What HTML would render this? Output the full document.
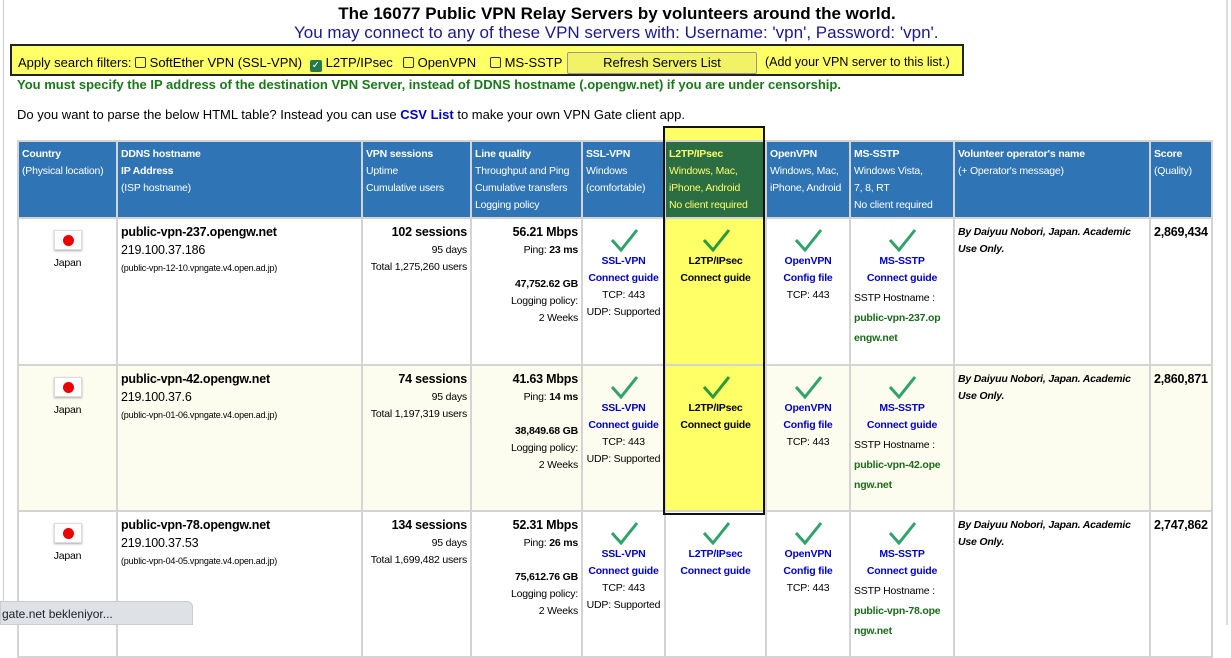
<!DOCTYPE html>
<html><head><meta charset="utf-8"><style>
*{margin:0;padding:0;box-sizing:border-box}
body{width:1231px;height:625px;overflow:hidden;background:#fff;font-family:"Liberation Sans",sans-serif;position:relative;color:#000}
.a{position:absolute;white-space:nowrap}
.lb{position:absolute;left:3px;top:0;width:1px;height:625px;background:#ccc}
.rb{position:absolute;left:1226px;top:0;width:2px;height:625px;background:#ddd}
table{position:absolute;left:17px;top:140px;border-collapse:collapse;table-layout:fixed;font-size:10.5px;line-height:17px;letter-spacing:-0.2px}
td{border:2px solid #d4d4d4;vertical-align:top;padding:5px 3px 3px;white-space:nowrap;overflow:hidden}
tr.h td{background:#2f74b5;color:#fff;border-color:#d4d4d4;height:76px;padding-top:4px}
.c{text-align:center}.r{text-align:right}
a{color:#0000cc;font-weight:bold;text-decoration:none}
.g{color:#1a6b1a;font-weight:bold}
.big{font-size:12.5px;line-height:17px}
.flag{width:28px;height:20px;margin:6px auto 5px;border:1px solid #ddd;box-shadow:0 1px 2px #aaa;background:#fff;position:relative}
.flag:after{content:"";position:absolute;left:8px;top:4px;width:11px;height:11px;border-radius:50%;background:#e00}
svg.ck{display:block;margin:4px auto 1px}
.cb{display:inline-block;width:11px;height:11px;border:1px solid #333;border-radius:2px;vertical-align:-1px}
</style></head><body>
<div class="lb"></div><div class="rb"></div>
<div class="a" style="left:337px;top:4px;width:560px;text-align:center;font-size:17px;font-weight:bold">The 16077 Public VPN Relay Servers by volunteers around the world.</div>
<div class="a" style="left:294px;top:23px;width:644px;text-align:center;font-size:17px;color:#1a1a8c">You may connect to any of these VPN servers with: Username: 'vpn', Password: 'vpn'.</div>
<div class="a" style="left:10px;top:44px;width:954px;height:32px;background:#ffff66;border:2px solid #222"></div>
<div class="a" style="left:18px;top:55px;font-size:13px">Apply search filters: <span class="cb"></span> SoftEther VPN (SSL-VPN)</div>
<div class="a" style="left:310px;top:55px;font-size:13px"><span style="display:inline-block;width:12px;height:12px;background:#217a4e;border-radius:2px;vertical-align:-1px;color:#fff;font-size:10px;line-height:12px;text-align:center">✓</span> L2TP/IPsec</div>
<div class="a" style="left:403px;top:55px;font-size:13px"><span class="cb"></span> OpenVPN</div>
<div class="a" style="left:490px;top:55px;font-size:13px"><span class="cb"></span> MS-SSTP</div>
<div class="a" style="left:567px;top:52px;width:190px;height:22px;background:#f2f266;border:1px solid #999;border-radius:2px;font-size:13px;text-align:center;line-height:20px">Refresh Servers List</div>
<div class="a" style="left:765px;top:55px;font-size:12.5px">(Add your VPN server to this list.)</div>
<div class="a" style="left:17px;top:77px;font-size:13px;font-weight:bold;color:#1a7a1a">You must specify the IP address of the destination VPN Server, instead of DDNS hostname (.opengw.net) if you are under censorship.</div>
<div class="a" style="left:17px;top:107px;font-size:13px">Do you want to parse the below HTML table? Instead you can use <a>CSV List</a> to make your own VPN Gate client app.</div>

<table>
<colgroup><col style="width:99px"><col style="width:245px"><col style="width:109px"><col style="width:111px"><col style="width:83px"><col style="width:101px"><col style="width:84px"><col style="width:104px"><col style="width:196px"><col style="width:60px"></colgroup>
<tr class="h">
<td><b>Country</b><br>(Physical location)</td>
<td><b>DDNS hostname<br>IP Address</b><br>(ISP hostname)</td>
<td><b>VPN sessions</b><br>Uptime<br>Cumulative users</td>
<td><b>Line quality</b><br>Throughput and Ping<br>Cumulative transfers<br>Logging policy</td>
<td><b>SSL-VPN</b><br>Windows<br>(comfortable)</td>
<td style="background:#2b6e44;color:#ffff66"><b>L2TP/IPsec</b><br>Windows, Mac,<br>iPhone, Android<br>No client required</td>
<td><b>OpenVPN</b><br>Windows, Mac,<br>iPhone, Android</td>
<td><b>MS-SSTP</b><br>Windows Vista,<br>7, 8, RT<br>No client required</td>
<td><b>Volunteer operator's name</b><br>(+ Operator's message)</td>
<td><b>Score</b><br>(Quality)</td>
</tr>
<tr style="height:147px">
<td class="c"><div class="flag"></div>Japan</td>
<td><b class="big">public-vpn-237.opengw.net</b><br><span class="big">219.100.37.186</span><br><span style="font-size:9px">(public-vpn-12-10.vpngate.v4.open.ad.jp)</span></td>
<td class="r"><b class="big">102 sessions</b><br>95 days<br>Total 1,275,260 users</td>
<td class="r"><b class="big">56.21 Mbps</b><br>Ping: <b>23 ms</b><br><br><b>47,752.62 GB</b><br>Logging policy:<br>2 Weeks</td>
<td class="c"><svg class="ck" width="30" height="24"><path d="M3 12 L12 22 L28 2" fill="none" stroke="#2ea36a" stroke-width="3"/></svg><a>SSL-VPN</a><br><a>Connect guide</a><br>TCP: 443<br>UDP: Supported</td>
<td class="c" style="background:#ffff66"><svg class="ck" width="30" height="24"><path d="M3 12 L12 22 L28 2" fill="none" stroke="#2a9a3a" stroke-width="3"/></svg><b>L2TP/IPsec</b><br><b>Connect guide</b></td>
<td class="c"><svg class="ck" width="30" height="24"><path d="M3 12 L12 22 L28 2" fill="none" stroke="#2ea36a" stroke-width="3"/></svg><a>OpenVPN</a><br><a>Config file</a><br>TCP: 443</td>
<td class="c"><svg class="ck" width="30" height="24"><path d="M3 12 L12 22 L28 2" fill="none" stroke="#2ea36a" stroke-width="3"/></svg><a>MS-SSTP</a><br><a>Connect guide</a><div style="text-align:left;line-height:20px;margin-top:1px">SSTP Hostname :<br><span class="g">public-vpn-237.op<br>engw.net</span></div></td>
<td><i><b>By Daiyuu Nobori, Japan. Academic<br>Use Only.</b></i></td>
<td class="r"><b class="big">2,869,434</b></td>
</tr>
<tr style="height:146px;background:#fdfdef">
<td class="c"><div class="flag"></div>Japan</td>
<td><b class="big">public-vpn-42.opengw.net</b><br><span class="big">219.100.37.6</span><br><span style="font-size:9px">(public-vpn-01-06.vpngate.v4.open.ad.jp)</span></td>
<td class="r"><b class="big">74 sessions</b><br>95 days<br>Total 1,197,319 users</td>
<td class="r"><b class="big">41.63 Mbps</b><br>Ping: <b>14 ms</b><br><br><b>38,849.68 GB</b><br>Logging policy:<br>2 Weeks</td>
<td class="c"><svg class="ck" width="30" height="24"><path d="M3 12 L12 22 L28 2" fill="none" stroke="#2ea36a" stroke-width="3"/></svg><a>SSL-VPN</a><br><a>Connect guide</a><br>TCP: 443<br>UDP: Supported</td>
<td class="c" style="background:#ffff66"><svg class="ck" width="30" height="24"><path d="M3 12 L12 22 L28 2" fill="none" stroke="#2a9a3a" stroke-width="3"/></svg><b>L2TP/IPsec</b><br><b>Connect guide</b></td>
<td class="c"><svg class="ck" width="30" height="24"><path d="M3 12 L12 22 L28 2" fill="none" stroke="#2ea36a" stroke-width="3"/></svg><a>OpenVPN</a><br><a>Config file</a><br>TCP: 443</td>
<td class="c"><svg class="ck" width="30" height="24"><path d="M3 12 L12 22 L28 2" fill="none" stroke="#2ea36a" stroke-width="3"/></svg><a>MS-SSTP</a><br><a>Connect guide</a><div style="text-align:left;line-height:20px;margin-top:1px">SSTP Hostname :<br><span class="g">public-vpn-42.ope<br>ngw.net</span></div></td>
<td><i><b>By Daiyuu Nobori, Japan. Academic<br>Use Only.</b></i></td>
<td class="r"><b class="big">2,860,871</b></td>
</tr>
<tr style="height:146px">
<td class="c"><div class="flag"></div>Japan</td>
<td><b class="big">public-vpn-78.opengw.net</b><br><span class="big">219.100.37.53</span><br><span style="font-size:9px">(public-vpn-04-05.vpngate.v4.open.ad.jp)</span></td>
<td class="r"><b class="big">134 sessions</b><br>95 days<br>Total 1,699,482 users</td>
<td class="r"><b class="big">52.31 Mbps</b><br>Ping: <b>26 ms</b><br><br><b>75,612.76 GB</b><br>Logging policy:<br>2 Weeks</td>
<td class="c"><svg class="ck" width="30" height="24"><path d="M3 12 L12 22 L28 2" fill="none" stroke="#2ea36a" stroke-width="3"/></svg><a>SSL-VPN</a><br><a>Connect guide</a><br>TCP: 443<br>UDP: Supported</td>
<td class="c"><svg class="ck" width="30" height="24"><path d="M3 12 L12 22 L28 2" fill="none" stroke="#2ea36a" stroke-width="3"/></svg><a>L2TP/IPsec</a><br><a>Connect guide</a></td>
<td class="c"><svg class="ck" width="30" height="24"><path d="M3 12 L12 22 L28 2" fill="none" stroke="#2ea36a" stroke-width="3"/></svg><a>OpenVPN</a><br><a>Config file</a><br>TCP: 443</td>
<td class="c"><svg class="ck" width="30" height="24"><path d="M3 12 L12 22 L28 2" fill="none" stroke="#2ea36a" stroke-width="3"/></svg><a>MS-SSTP</a><br><a>Connect guide</a><div style="text-align:left;line-height:20px;margin-top:1px">SSTP Hostname :<br><span class="g">public-vpn-78.ope<br>ngw.net</span></div></td>
<td><i><b>By Daiyuu Nobori, Japan. Academic<br>Use Only.</b></i></td>
<td class="r"><b class="big">2,747,862</b></td>
</tr>
</table>
<div class="a" style="left:663px;top:126px;width:102px;height:389px;border:2px solid #111;pointer-events:none"></div>
<div class="a" style="left:665px;top:128px;width:98px;height:12px;background:#ffff66"></div>
<div class="a" style="left:0;top:601px;width:193px;height:24px;background:#dee1e6;border:1px solid #c8cbd0;border-radius:0 6px 0 0;font-size:12px;line-height:24px;padding-left:1px;color:#222">gate.net bekleniyor...</div>
</body></html>
